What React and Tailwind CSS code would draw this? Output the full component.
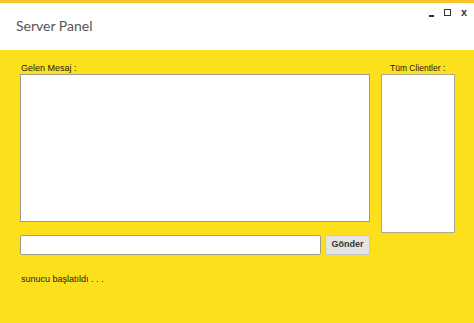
import React from 'react';

const App = () => {
    return (
        <div className="w-[474px] h-[323px] bg-[#fde01c] flex flex-col overflow-hidden" style={{ fontFamily: 'Arial' }}>
            {/* Title bar */}
            <div className="h-[3px] bg-[#f7c32c]" />
            <div className="h-[47px] bg-white flex items-start justify-between">
                <span className="mt-[12px] ml-[16px] text-[14px] text-[#555]" style={{ fontFamily: 'Lato, sans-serif' }}>
                    Server Panel
                </span>
                <div className="flex items-center gap-[10px] mt-[4px] mr-[7px] text-[#333]">
                    <span className="w-[5px] h-[2px] bg-[#333] mt-[6px]" />
                    <span className="w-[7px] h-[7px] border border-[#333]" />
                    <span className="text-[11px] leading-none font-bold">x</span>
                </div>
            </div>

            {/* Body */}
            <div className="flex pl-[20px] pt-[13px] gap-[10px]">
                <div className="flex flex-col w-[350px]">
                    <span className="text-[9px] leading-[11px] text-[#1a1a1a] pl-[1px]" style={{ fontFamily: '"Liberation Sans", sans-serif' }}>Gelen Mesaj :</span>
                    <div className="h-[148px] bg-white border border-[#a09a8a]" />
                    <div className="flex items-center mt-[13px] gap-[4px]">
                        <div className="w-[301px] h-[20px] bg-white border border-[#a09a8a] rounded-[2px]" />
                        <button className="w-[45px] h-[20px] bg-[#e4e4e2] border border-[#c8c8c8] rounded-[2px] text-[9px] font-bold text-[#333]" style={{ fontFamily: '"Liberation Sans", sans-serif' }}>
                            Gönder
                        </button>
                    </div>
                    <span className="mt-[18px] pl-[1px] text-[9px] text-[#222]" style={{ fontFamily: '"Liberation Sans", sans-serif' }}>
                        sunucu başlatıldı . . .
                    </span>
                </div>
                <div className="flex flex-col w-[74px] ml-[1px]">
                    <span className="text-[8.5px] leading-[11px] text-[#1a1a1a] pl-[9px]" style={{ fontFamily: '"Liberation Sans", sans-serif' }}>Tüm Clientler :</span>
                    <div className="h-[159px] bg-white border border-[#b0aa90]" />
                </div>
            </div>
        </div>
    );
};

export default App;
